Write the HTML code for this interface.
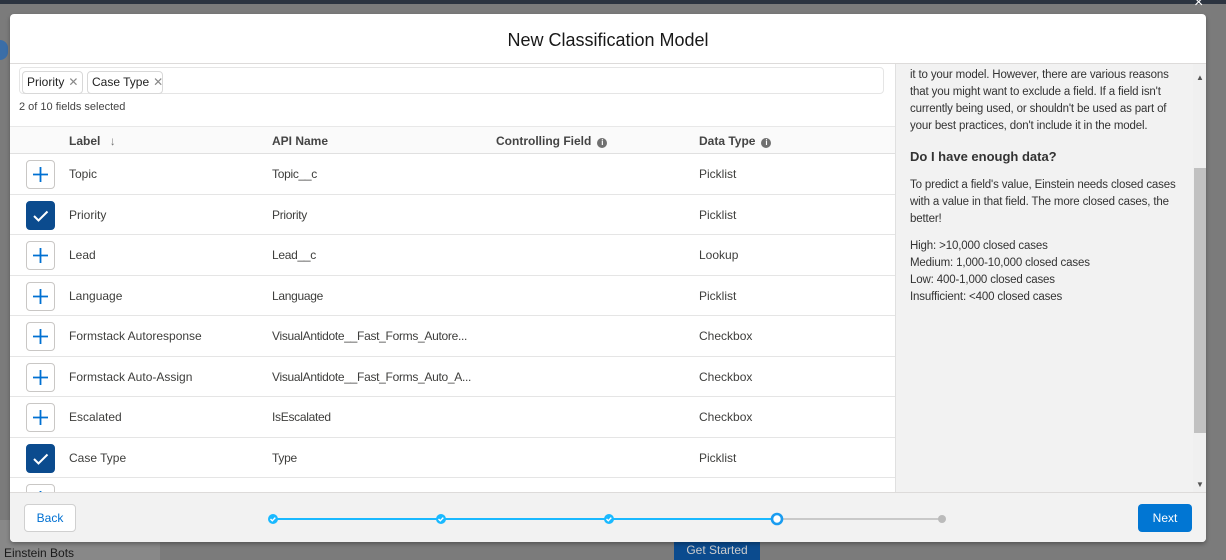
<!DOCTYPE html>
<html><head><style>
*{box-sizing:border-box;margin:0;padding:0}
body{width:1226px;height:560px;overflow:hidden;background:#7b7b7b;font-family:"Liberation Sans",sans-serif;position:relative;color:#3e3e3c}
.topbar{position:absolute;left:0;top:0;width:1226px;height:4px;background:#2c3440}
.bgtext{position:absolute;color:#1a1a1a;font-size:12px}
.modal{position:absolute;left:10px;top:14px;width:1196px;height:528px;background:#fff;border-radius:4px;overflow:hidden;box-shadow:0 2px 4px rgba(0,0,0,.3)}
.hdr{height:50px;border-bottom:1px solid #dddbda;text-align:center;font-size:18px;line-height:52px;color:#181818}
.left{position:absolute;left:0;top:50px;width:885px;height:428px;background:#fff}
.pills{position:absolute;left:9px;top:3px;width:865px;height:27px;border:1px solid #e5e5e5;border-radius:4px}
.pill{position:absolute;top:3px;height:23px;border:1px solid #d8d8d8;border-radius:4px;font-size:12px;line-height:21px;padding-left:4px;color:#222;white-space:nowrap}
.pill span{color:#888;margin-left:4px;font-size:12px}
.cnt{position:absolute;left:9px;top:37px;font-size:11px;color:#444}
.th{position:absolute;top:62px;left:0;width:885px;height:28px;border-top:1px solid #e8e8e8;border-bottom:1px solid #e0e0e0;font-size:12px;font-weight:bold;color:#444;background:#fafafa}
.th div,.row div{position:absolute;white-space:nowrap}
.row{position:absolute;left:0;width:885px;height:40.5px;border-bottom:1px solid #e5e5e5;font-size:12px;color:#3e3e3c}
.row .t{top:13px}
.b{left:16px;top:6px;width:29px;height:29px;border:1px solid #c9c7c5;border-radius:4px;background:#fff}
.b.on{background:#0b4b8e;border-color:#0b4b8e}
.info{display:inline-block;width:10px;height:10px;border-radius:50%;background:#707070;color:#fff;font-size:8px;text-align:center;line-height:10px;margin-left:6px;vertical-align:0}
.right{position:absolute;left:885px;top:50px;width:311px;height:428px;background:#f2f2f2;border-left:1px solid #e0e0e0;font-size:11.5px;line-height:17px;color:#333;letter-spacing:-0.15px}
.right p{position:absolute;left:14px;white-space:nowrap}
.sb{position:absolute;left:297px;top:0;width:14px;height:428px;background:#f0f0f0}
.foot{position:absolute;left:0;top:478px;width:1196px;height:50px;background:#f2f2f2;border-top:1px solid #dddbda}
</style></head><body>
<div class="topbar"></div>
<div style="position:absolute;left:0;top:40px;width:8px;height:20px;background:#3b6ea8;border-radius:0 10px 10px 0"></div>
<div style="position:absolute;left:0;top:520px;width:160px;height:40px;background:#888"></div>
<div class="bgtext" style="left:4px;top:546px">Einstein Bots</div>
<div style="position:absolute;left:674px;top:542px;width:86px;height:18px;background:#0b4b8e;color:#ccc;font-size:12px;text-align:center;line-height:16px">Get Started</div>
<div style="position:absolute;left:1194px;top:-6px;color:#fff;font-size:16px">×</div>
<div class="modal">
 <div class="hdr">New Classification Model</div>
 <div class="left">
  <div class="pills">
   <div class="pill" style="left:2px;width:61px">Priority<span>✕</span></div>
   <div class="pill" style="left:67px;width:76px">Case Type<span>✕</span></div>
  </div>
  <div class="cnt">2 of 10 fields selected</div>
  <div class="th">
   <div style="left:59px;top:7px">Label <span style="color:#777;font-weight:normal;margin-left:6px">↓</span></div>
   <div style="left:262px;top:7px">API Name</div>
   <div style="left:486px;top:7px">Controlling Field<span class="info">i</span></div>
   <div style="left:689px;top:7px">Data Type<span class="info">i</span></div>
  </div>
  <div id="rows"></div>
 </div>
 <div class="right">
  <p style="top:3px">it to your model. However, there are various reasons<br>that you might want to exclude a field. If a field isn't<br>currently being used, or shouldn't be used as part of<br>your best practices, don't include it in the model.</p>
  <p style="top:84px;font-weight:bold;font-size:13px;letter-spacing:0">Do I have enough data?</p>
  <p style="top:113px">To predict a field's value, Einstein needs closed cases<br>with a value in that field. The more closed cases, the<br>better!</p>
  <p style="top:174px">High: &gt;10,000 closed cases<br>Medium: 1,000-10,000 closed cases<br>Low: 400-1,000 closed cases<br>Insufficient: &lt;400 closed cases</p>
  <div class="sb"><div style="position:absolute;left:3px;top:5px;color:#555;font-size:8px">▲</div><div style="position:absolute;left:1px;top:104px;width:12px;height:265px;background:#c1c1c1"></div><div style="position:absolute;left:3px;top:412px;color:#555;font-size:8px">▼</div></div>
 </div>
 <div class="foot">
  <div style="position:absolute;left:14px;top:11px;width:52px;height:28px;border:1px solid #d0d0d0;border-radius:4px;background:#fff;color:#0070d2;font-size:12px;text-align:center;line-height:26px">Back</div>
  <svg style="position:absolute;left:250px;top:14px" width="700" height="24">
   <line x1="10" y1="12" x2="517" y2="12" stroke="#1ab9ff" stroke-width="2"/>
   <line x1="517" y1="12" x2="683" y2="12" stroke="#c9c9c9" stroke-width="2"/>
   <g fill="#1ab9ff"><circle cx="13" cy="12" r="5"/><circle cx="181" cy="12" r="5"/><circle cx="349" cy="12" r="5"/></g>
   <g stroke="#fff" stroke-width="1.4" fill="none"><path d="M10.5 12l1.8 1.8 3-3.2"/><path d="M178.5 12l1.8 1.8 3-3.2"/><path d="M346.5 12l1.8 1.8 3-3.2"/></g>
   <circle cx="517" cy="12" r="5" fill="#fff" stroke="#1a9cf0" stroke-width="2.6"/>
   <circle cx="682" cy="12" r="4" fill="#bbb"/>
  </svg>
  <div style="position:absolute;left:1128px;top:11px;width:54px;height:28px;border-radius:4px;background:#0176d3;color:#fff;font-size:12px;text-align:center;line-height:28px">Next</div>
 </div>
</div>
<script>
var d=[["Topic","Topic__c","Picklist",0],["Priority","Priority","Picklist",1],["Lead","Lead__c","Lookup",0],["Language","Language","Picklist",0],["Formstack Autoresponse","VisualAntidote__Fast_Forms_Autore...","Checkbox",0],["Formstack Auto-Assign","VisualAntidote__Fast_Forms_Auto_A...","Checkbox",0],["Escalated","IsEscalated","Checkbox",0],["Case Type","Type","Picklist",1],["","","",0]];
var h="";d.forEach(function(r,i){var top=90+i*40.5;
var ic=r[3]?'<svg width="27" height="27" style="position:absolute;left:0;top:0"><path d="M7 14l4.5 4.5 9-9" stroke="#fff" stroke-width="2" fill="none"/></svg>':'<svg width="27" height="27" style="position:absolute;left:0;top:0"><path d="M13.5 6v15M6 13.5h15" stroke="#0070d2" stroke-width="1.8"/></svg>';
h+='<div class="row" style="top:'+top+'px"><div class="b'+(r[3]?' on':'')+'">'+ic+'</div><div class="t" style="left:59px">'+r[0]+'</div><div class="t" style="left:262px;letter-spacing:-0.3px">'+r[1]+'</div><div class="t" style="left:689px">'+r[2]+'</div></div>';});
document.getElementById("rows").innerHTML=h;
</script>
</body></html>
